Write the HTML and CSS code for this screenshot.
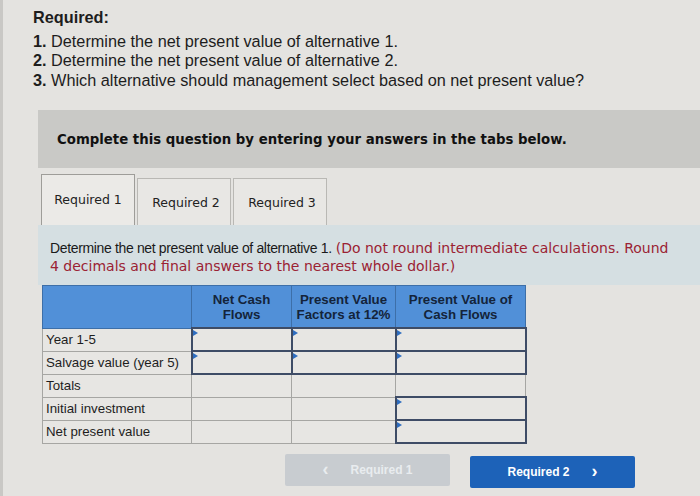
FILE: index.html
```html
<!DOCTYPE html>
<html>
<head>
<meta charset="utf-8">
<link rel="stylesheet" href="styles.css">
</head>
<body>
<div class="page">
  <div class="edge"></div>
  <div class="main">
    <div class="required">
      <p class="req-title">Required:</p>
      <p><b>1.</b> Determine the net present value of alternative 1.</p>
      <p><b>2.</b> Determine the net present value of alternative 2.</p>
      <p><b>3.</b> Which alternative should management select based on net present value?</p>
    </div>
    <div class="banner">Complete this question by entering your answers in the tabs below.</div>
    <div class="tabs">
      <div class="tab active">Required 1</div>
      <div class="tab">Required 2</div>
      <div class="tab">Required 3</div>
    </div>
    <div class="panel">
      <div class="line"><span class="lead">Determine the net present value of alternative 1.</span> <span class="note">(Do not round intermediate calculations. Round</span></div>
      <div class="line"><span class="note">4 decimals and final answers to the nearest whole dollar.)</span></div>
    </div>
    <table class="grid">
      <thead>
        <tr>
          <th class="c1"></th>
          <th class="c2">Net Cash<br>Flows</th>
          <th class="c3">Present Value<br>Factors at 12%</th>
          <th class="c4">Present Value of<br>Cash Flows</th>
        </tr>
      </thead>
      <tbody>
        <tr><td>Year 1-5</td><td class="in"></td><td class="in"></td><td class="in"></td></tr>
        <tr><td>Salvage value (year 5)</td><td class="in"></td><td class="in"></td><td class="in"></td></tr>
        <tr><td>Totals</td><td></td><td></td><td></td></tr>
        <tr><td>Initial investment</td><td></td><td></td><td class="in"></td></tr>
        <tr><td>Net present value</td><td></td><td></td><td class="in"></td></tr>
      </tbody>
    </table>
    <div class="nav">
      <div class="btn prev"><span class="chev">&lsaquo;</span> Required 1</div>
      <div class="btn next">Required 2 <span class="chev">&rsaquo;</span></div>
    </div>
  </div>
</div>
</body>
</html>
```
FILE: styles.css
```css
html, body {
  margin: 0;
  padding: 0;
  width: 700px;
  height: 496px;
  overflow: hidden;
  background: #e4e3e0;
}
.page {
  display: flex;
  height: 496px;
}
.edge {
  width: 3px;
  background: #c9c8c5;
  flex: none;
}
.main {
  flex: 1;
  padding-left: 30px;
  padding-top: 8px;
}
.required {
  font-family: "Liberation Sans", Arial, sans-serif;
  font-size: 16.25px;
  color: #1d1d1d;
}
.required p {
  margin: 0;
  line-height: 19.5px;
}
.required p.req-title {
  font-weight: bold;
  margin-bottom: 4px;
}
.banner {
  margin-top: 20px;
  margin-left: 5px;
  height: 58px;
  background: #c9c9c6;
  display: flex;
  align-items: center;
  padding-left: 19px;
  font-family: "DejaVu Sans", Verdana, sans-serif;
  font-weight: bold;
  font-size: 13.3px;
  color: #111;
}
.tabs {
  display: flex;
  align-items: flex-end;
  margin-left: 8px;
  margin-top: 6px;
  gap: 2px;
}
.tab {
  width: 94px;
  height: 47px;
  border: 1px solid #b9b8b4;
  border-bottom: none;
  background: #e8e7e4;
  font-family: "DejaVu Sans", Verdana, sans-serif;
  font-size: 12.5px;
  color: #222;
  display: flex;
  align-items: center;
  justify-content: center;
  box-sizing: border-box;
}
.tab:nth-child(2) { padding-left: 4px; }
.tab:nth-child(3) { padding-left: 4px; }
.tab.active {
  height: 51px;
  background: #ebeae7;
  border-color: #9e9d99;
  padding-bottom: 2px;
}
.panel {
  margin-left: 5px;
  background: #d5dfe2;
  padding: 14px 12px 10px 12px;
  height: 36px;
  color: #1a1a1a;
  white-space: nowrap;
  overflow: hidden;
}
.line {
  height: 18px;
  line-height: 18px;
}
.lead {
  font-family: "Liberation Sans", Arial, sans-serif;
  font-size: 14px;
  letter-spacing: -0.35px;
}
.note {
  font-family: "DejaVu Sans", Verdana, sans-serif;
  font-size: 14px;
  color: #9b2233;
}
.grid {
  margin-left: 9px;
  border-collapse: collapse;
  font-family: "Liberation Sans", Arial, sans-serif;
  font-size: 13.3px;
  color: #1e1e1e;
}
.grid th {
  background: #5190d8;
  border: 1px solid #3d6fa8;
  height: 41px;
  font-weight: bold;
  line-height: 15px;
  color: #14243a;
  text-align: center;
  vertical-align: middle;
  padding: 0;
}
.grid .c1 { width: 148px; }
.grid .c2 { width: 99px; }
.grid .c3 { width: 103px; }
.grid .c4 { width: 129px; }
.grid td {
  height: 21px;
  line-height: 16px;
  border: 1px solid #a6a6a3;
  background: #e7e6e3;
  padding: 0 3px;
  vertical-align: middle;
}
.grid td.in {
  border: 2px solid #3e4c66;
  position: relative;
}
.grid td.in::before {
  content: "";
  position: absolute;
  left: 0;
  top: 1px;
  border-left: 5px solid #2e6dc0;
  border-top: 3px solid transparent;
  border-bottom: 3px solid transparent;
}
.nav {
  display: flex;
  margin-left: 252px;
  margin-top: 10px;
  gap: 20px;
}
.btn {
  width: 165px;
  height: 32px;
  border-radius: 2px;
  display: flex;
  align-items: center;
  justify-content: center;
  font-family: "Liberation Sans", Arial, sans-serif;
  font-weight: bold;
  font-size: 12px;
  gap: 10px;
}
.btn.prev {
  background: #c8ccd0;
  color: #e9ecef;
}
.btn.next {
  background: #1d62b8;
  color: #ffffff;
  margin-top: 2px;
}
.chev {
  font-size: 18px;
  font-weight: bold;
  line-height: 1;
  margin-top: -3px;
}
.btn.next .chev { margin-left: 12px; }
.btn.prev .chev { margin-right: 12px; }
```
